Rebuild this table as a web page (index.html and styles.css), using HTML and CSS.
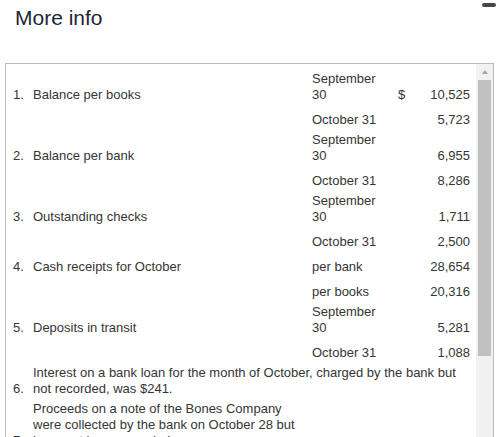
FILE: index.html
```html
<!DOCTYPE html>
<html lang="en">
<head>
<meta charset="utf-8">
<title>More info</title>
<link rel="stylesheet" href="styles.css">
</head>
<body>
<header class="header">
  <h1 class="title">More info</h1>
  <span class="win-icon" aria-hidden="true"></span>
</header>
<section class="panel">
  <div class="panel-content">
    <table class="info">
      <colgroup>
        <col class="c-num"><col class="c-label"><col class="c-date"><col class="c-cur"><col class="c-amt">
      </colgroup>
      <tbody>
        <tr class="two">
          <td class="num">1.</td><td>Balance per books</td><td class="date">September 30</td><td class="cur">$</td><td class="amt">10,525</td>
        </tr>
        <tr>
          <td></td><td></td><td class="date">October 31</td><td></td><td class="amt">5,723</td>
        </tr>
        <tr class="two">
          <td class="num">2.</td><td>Balance per bank</td><td class="date">September 30</td><td></td><td class="amt">6,955</td>
        </tr>
        <tr>
          <td></td><td></td><td class="date">October 31</td><td></td><td class="amt">8,286</td>
        </tr>
        <tr class="two">
          <td class="num">3.</td><td>Outstanding checks</td><td class="date">September 30</td><td></td><td class="amt">1,711</td>
        </tr>
        <tr>
          <td></td><td></td><td class="date">October 31</td><td></td><td class="amt">2,500</td>
        </tr>
        <tr>
          <td class="num">4.</td><td>Cash receipts for October</td><td class="date">per bank</td><td></td><td class="amt">28,654</td>
        </tr>
        <tr>
          <td></td><td></td><td class="date">per books</td><td></td><td class="amt">20,316</td>
        </tr>
        <tr class="two">
          <td class="num">5.</td><td>Deposits in transit</td><td class="date">September 30</td><td></td><td class="amt">5,281</td>
        </tr>
        <tr>
          <td></td><td></td><td class="date">October 31</td><td></td><td class="amt">1,088</td>
        </tr>
        <tr class="two">
          <td class="num">6.</td><td colspan="4">Interest on a bank loan for the month of October, charged by the bank but not recorded, was $241.</td>
        </tr>
        <tr class="two">
          <td class="num">7.</td><td>Proceeds on a note of the Bones Company were collected by the bank on October 28 but have not been recorded.</td><td></td><td></td><td class="amt"></td>
        </tr>
      </tbody>
    </table>
  </div>
  <div class="scrollbar" aria-hidden="true">
    <div class="sb-up"><span class="sb-arrow"></span></div>
    <div class="sb-thumb"></div>
  </div>
</section>
</body>
</html>
```

FILE: styles.css
```css
html, body {
  margin: 0;
  padding: 0;
  background: #ffffff;
  overflow: hidden;
}

body {
  font-family: "Liberation Sans", Arial, sans-serif;
  width: 498px;
}

.header {
  display: flex;
  justify-content: space-between;
  align-items: flex-start;
  padding: 0 2px 33px 15px;
}

.title {
  margin: 6px 0 0 0;
  font-size: 21px;
  line-height: 24px;
  font-weight: normal;
  color: #1d2535;
}

.win-icon {
  display: block;
  margin-top: 3px;
  width: 14px;
  height: 4px;
  border-radius: 2px;
  background: #474747;
}

.panel {
  display: flex;
  margin-left: 5px;
  width: 489px;
  height: 400px;
  box-sizing: border-box;
  border: 1px solid #bcbcbc;
}

.panel-content {
  flex: 1;
  padding: 7px 6px 0 0;
  overflow: hidden;
}

.info {
  border-collapse: collapse;
  border-spacing: 0;
  table-layout: fixed;
  width: 464px;
  font-size: 13px;
  line-height: 16px;
  color: #353535;
}

.c-num { width: 27px; }
.c-label { width: 279px; }
.c-date { width: 80px; }
.c-cur { width: 28px; }
.c-amt { width: 50px; }

.info td {
  padding: 5px 0 4px 0;
  vertical-align: bottom;
  text-align: left;
}

.info tr.two td {
  padding-top: 0;
  padding-bottom: 4px;
}

.info td.num {
  padding-left: 7px;
}

.info td.cur {
  padding-left: 6px;
}

.info td.amt {
  text-align: right;
}

.scrollbar {
  width: 17px;
  flex: none;
  background: #f1f1f1;
  display: flex;
  flex-direction: column;
}

.sb-up {
  height: 16px;
  display: flex;
  align-items: center;
  justify-content: center;
}

.sb-arrow {
  width: 0;
  height: 0;
  border-left: 3.5px solid transparent;
  border-right: 3.5px solid transparent;
  border-bottom: 4px solid #a3a3a3;
}

.sb-thumb {
  margin: 0 2px;
  height: 276px;
  background: #c1c1c1;
}
```
